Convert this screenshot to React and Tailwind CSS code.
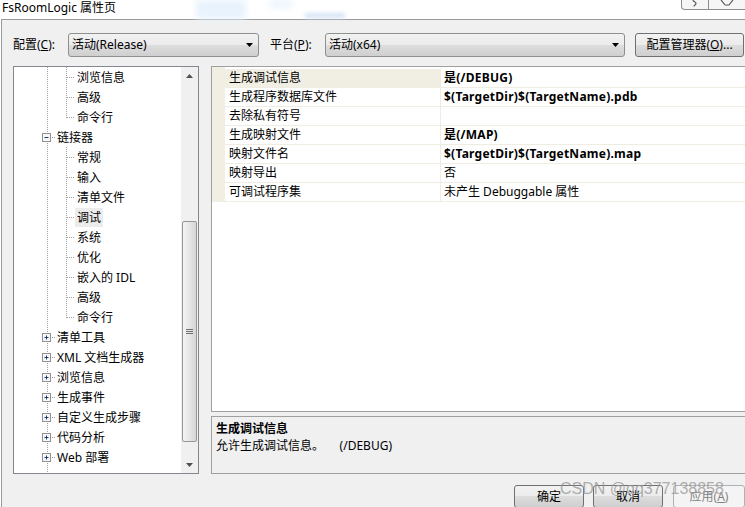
import React from "react";

const FONT = "font-['Noto_Sans','Noto_Sans_CJK_SC',sans-serif]";

function Arrow() {
  return (
    <svg width="7" height="4" viewBox="0 0 7 4" className="block">
      <path d="M0 0H7L3.5 4Z" fill="#000" />
    </svg>
  );
}

function Combo({ w, text }) {
  return (
    <div
      className={`${w} h-[24px] flex items-center justify-between rounded-[3px] border border-[#8e8f8f] bg-[linear-gradient(to_bottom,#f2f2f2_0%,#ebebeb_50%,#dddddd_50%,#cfcfcf_100%)] pl-[3px] pr-[5px]`}
    >
      <span className="leading-[16px]">{text}</span>
      <Arrow />
    </div>
  );
}

function Btn({ w, children, disabled, className = "" }) {
  return (
    <div
      className={`${w} h-[23px] flex items-center justify-center rounded-[3px] border ${
        disabled
          ? "border-[#adb2b5] bg-[#f4f4f4] text-[#838383]"
          : "border-[#707070] bg-[linear-gradient(to_bottom,#f2f2f2_0%,#ebebeb_50%,#dddddd_50%,#cfcfcf_100%)]"
      } leading-[16px] ${className}`}
    >
      {children}
    </div>
  );
}

const DOT = "#a0a0a0";

function ChildConnector({ last }) {
  return (
    <svg width="61" height="20" className="block flex-none">
      <line x1="33.5" y1="0" x2="33.5" y2="20" stroke={DOT} strokeDasharray="1 1" />
      <line x1="52.5" y1="0" x2="52.5" y2={last ? 11 : 20} stroke={DOT} strokeDasharray="1 1" />
      <line x1="53" y1="10.5" x2="61" y2="10.5" stroke={DOT} strokeDasharray="1 1" />
    </svg>
  );
}

function ParentConnector({ open }) {
  return (
    <svg width="41" height="20" className="block flex-none">
      <line x1="33.5" y1="0" x2="33.5" y2="20" stroke={DOT} strokeDasharray="1 1" />
      <line x1="38" y1="10.5" x2="41" y2="10.5" stroke={DOT} strokeDasharray="1 1" />
      <rect x="28.5" y="6.5" width="8" height="8" fill="#f7f7f7" stroke="#919191" />
      <line x1="30.5" y1="10.5" x2="34.5" y2="10.5" stroke="#1e3c78" />
      {!open && <line x1="32.5" y1="8.5" x2="32.5" y2="12.5" stroke="#1e3c78" />}
    </svg>
  );
}

const treeRows = [
  { t: "浏览信息", c: true },
  { t: "高级", c: true },
  { t: "命令行", c: true, last: true },
  { t: "链接器", p: true, open: true },
  { t: "常规", c: true },
  { t: "输入", c: true },
  { t: "清单文件", c: true },
  { t: "调试", c: true, sel: true },
  { t: "系统", c: true },
  { t: "优化", c: true },
  { t: "嵌入的 IDL", c: true },
  { t: "高级", c: true },
  { t: "命令行", c: true, last: true },
  { t: "清单工具", p: true },
  { t: "XML 文档生成器", p: true },
  { t: "浏览信息", p: true },
  { t: "生成事件", p: true },
  { t: "自定义生成步骤", p: true },
  { t: "代码分析", p: true },
  { t: "Web 部署", p: true },
];

function Tree() {
  return (
    <div className="w-[186px] h-[408px] flex-none border border-[#828790] bg-white flex">
      <div className="flex-1 flex flex-col overflow-hidden">
        {treeRows.map((r, i) => (
          <div key={i} className="h-[20px] flex items-center flex-none">
            {r.p ? <ParentConnector open={r.open} /> : <ChildConnector last={r.last} />}
            <span
              className={`px-[2px] h-[19px] leading-[19px] whitespace-nowrap ${
                r.sel ? "bg-[#ececec]" : ""
              }`}
            >
              {r.t}
            </span>
          </div>
        ))}
        <svg width="61" height="6" className="block flex-none">
          <line x1="33.5" y1="0" x2="33.5" y2="5" stroke={DOT} strokeDasharray="1 1" />
        </svg>
      </div>
      <div className="w-[17px] flex-none flex flex-col bg-[#f0f0f0]">
        <div className="h-[17px] flex items-center justify-center flex-none">
          <svg width="7" height="4" viewBox="0 0 7 4">
            <path d="M0 4H7L3.5 0Z" fill="#505050" />
          </svg>
        </div>
        <div className="h-[137px] flex-none" />
        <div className="h-[221px] flex-none mx-[1px] rounded-[2px] border border-[#979797] bg-[linear-gradient(to_right,#f4f4f4,#e6e6e6_50%,#d5d5d5)] flex items-center justify-center">
          <svg width="7" height="7" viewBox="0 0 7 7">
            <line x1="0" y1="1.5" x2="7" y2="1.5" stroke="#707070" />
            <line x1="0" y1="3.5" x2="7" y2="3.5" stroke="#707070" />
            <line x1="0" y1="5.5" x2="7" y2="5.5" stroke="#707070" />
          </svg>
        </div>
        <div className="flex-1" />
        <div className="h-[17px] flex items-center justify-center flex-none">
          <svg width="7" height="4" viewBox="0 0 7 4">
            <path d="M0 0H7L3.5 4Z" fill="#505050" />
          </svg>
        </div>
      </div>
    </div>
  );
}

const gridRows = [
  { n: "生成调试信息", v: "是(/DEBUG)", b: true, sel: true },
  { n: "生成程序数据库文件", v: "$(TargetDir)$(TargetName).pdb", b: true },
  { n: "去除私有符号", v: "" },
  { n: "生成映射文件", v: "是(/MAP)", b: true },
  { n: "映射文件名", v: "$(TargetDir)$(TargetName).map", b: true },
  { n: "映射导出", v: "否" },
  { n: "可调试程序集", v: "未产生 Debuggable 属性" },
];

function Grid() {
  return (
    <div className="h-[346px] flex-none border-l border-t border-b border-[#a0a0a0] bg-white flex flex-col">
      <div className="h-[2px] flex-none flex">
        <div className="w-[13px] bg-[#f1efe4]" />
      </div>
      {gridRows.map((r, i) => (
        <div key={i} className="h-[19px] flex-none flex">
          <div className="w-[13px] flex-none bg-[#f1efe4]" />
          <div
            className={`w-[216px] flex-none pl-[4px] leading-[18px] border-b border-r border-[#efede2] whitespace-nowrap ${
              r.sel ? "bg-[#f1efe4]" : ""
            }`}
          >
            {r.n}
          </div>
          <div
            className={`flex-1 pl-[3px] leading-[18px] border-b border-[#efede2] whitespace-nowrap ${
              r.b ? "font-bold tracking-[0.25px]" : ""
            }`}
          >
            {r.v}
          </div>
        </div>
      ))}
    </div>
  );
}

export default function App() {
  return (
    <div
      className={`${FONT} relative w-[745px] h-[507px] overflow-hidden bg-white text-[12px] text-black flex flex-col`}
    >
      {/* aero glass blur artifacts */}
      <div className="pointer-events-none absolute left-[196px] top-[0px] w-[50px] h-[19px] bg-[#e8f3fd] blur-[3px]" />
      <div className="pointer-events-none absolute left-[270px] top-[0px] w-[22px] h-[8px] bg-[#ebf4fc] blur-[3px]" />
      <div className="pointer-events-none absolute left-[305px] top-[13px] w-[40px] h-[5px] bg-[#d3e3f5] blur-[2px]" />

      {/* title bar */}
      <div className="h-[19px] flex-none flex justify-between">
        <span className="pl-[2px] pt-[0px] leading-[15px] text-[12px]">FsRoomLogic 属性页</span>
        <div className="w-[64px] h-[10px] flex-none flex border-l border-b border-[#8d8d8d] rounded-bl-[4px] bg-[#f6f6f6]">
          <div className="w-[27px] border-r border-[#8d8d8d] flex justify-center">
            <svg width="8" height="8" viewBox="0 0 8 8">
              <path d="M2 0C2 2 5 1.5 5 3.5C5 5 3 5 3 6.5" fill="none" stroke="#555" strokeWidth="1.2" />
            </svg>
          </div>
          <div className="flex-1 flex justify-center">
            <svg width="14" height="8" viewBox="0 0 14 8">
              <path d="M1 0L5 5M13 0L9 5M5 5H9" fill="none" stroke="#555" strokeWidth="1.2" />
            </svg>
          </div>
        </div>
      </div>

      {/* dialog body */}
      <div className="flex-1 ml-[1px] border-l border-t border-[#9a9a9a] bg-[#f0f0f0] pl-[11px] pt-[13px] flex flex-col">
        <div className="h-[24px] flex items-center flex-none">
          <span className="w-[55px] leading-[16px]">
            配置(<span className="underline">C</span>):
          </span>
          <Combo w="w-[191px]" text="活动(Release)" />
          <span className="ml-[11px] w-[55px] leading-[16px]">
            平台(<span className="underline">P</span>):
          </span>
          <Combo w="w-[300px]" text="活动(x64)" />
          <Btn w="w-[109px] h-[24px]" className="ml-[10px]">
            配置管理器(<span className="underline">O</span>)...
          </Btn>
        </div>

        <div className="mt-[9px] flex flex-none">
          <Tree />
          <div className="ml-[12px] w-[545px] flex-none flex flex-col">
            <Grid />
            <div className="mt-[4px] h-[58px] flex-none border-l border-t border-b border-[#a0a0a0] bg-[#f0f0f0] pl-[4px] pt-[3px]">
              <div className="font-bold leading-[17px]">生成调试信息</div>
              <div className="leading-[17px] whitespace-pre">允许生成调试信息。     (/DEBUG)</div>
            </div>
          </div>
        </div>

        <div className="mt-[11px] ml-[501px] flex flex-none">
          <Btn w="w-[72px]">确定</Btn>
          <Btn w="w-[72px]" className="ml-[9px]">取消</Btn>
          <Btn w="w-[72px]" disabled className="ml-[10px] flex-none">
            应用(<span className="underline">A</span>)
          </Btn>
        </div>
      </div>

      {/* watermark */}
      <div className="pointer-events-none absolute left-[560px] top-[479px] font-['Liberation_Sans',sans-serif] text-[16px] leading-[20px] text-[#9a9a9a]/80 whitespace-nowrap">
        CSDN @qq377138858
      </div>
    </div>
  );
}
